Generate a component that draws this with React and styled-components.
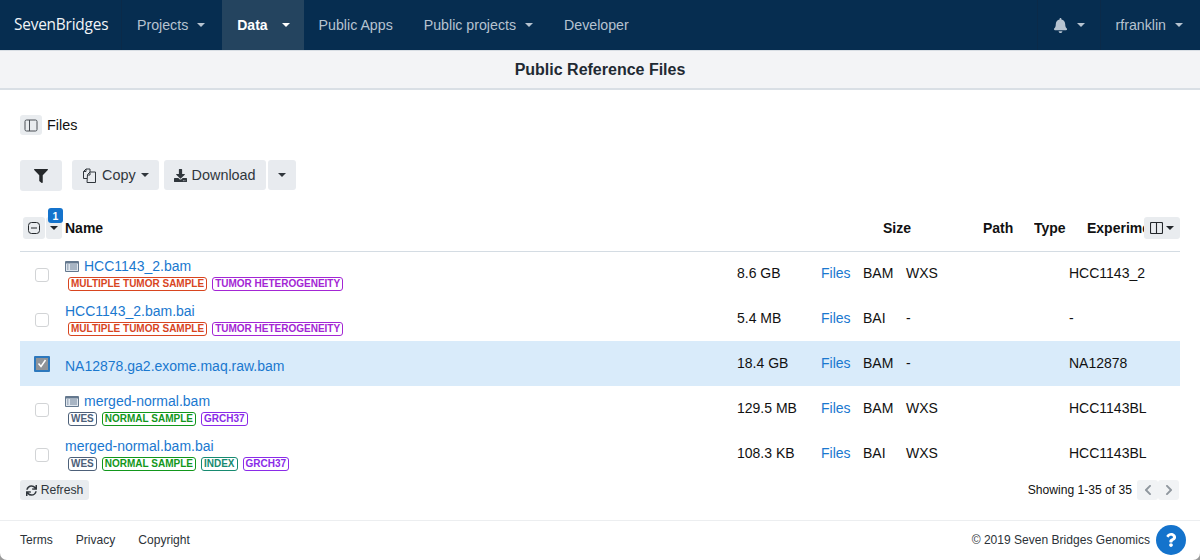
import React from "react";
import styled, { createGlobalStyle } from "styled-components";
import { FaBell, FaFilter, FaDownload, FaSync, FaChevronLeft, FaChevronRight, FaQuestion } from "react-icons/fa";

const Global = createGlobalStyle`
  html, body { margin: 0; padding: 0; height: 100%; background: #9a9a9a; }
  body { font-family: "Liberation Sans", Arial, sans-serif; color: #111; }
  * { box-sizing: border-box; }
`;

const Page = styled.div`
  width: 1200px;
  height: 560px;
  background: #fff;
  border-radius: 0 0 7px 7px;
  overflow: hidden;
  display: flex;
  flex-direction: column;
`;

const Nav = styled.nav`
  height: 50px;
  flex: none;
  display: flex;
  background: #062d50;
  color: #b6c3d0;
  font-size: 14.2px;
`;

const Logo = styled.div`
  width: 122px;
  padding: 14px 0 0 14px;
  color: #f1f4f7;
  font-family: "Open Sans", sans-serif;
  font-size: 15.4px;
  letter-spacing: -0.2px;
  border-right: 1px solid #0a2a49;
`;

const NavItem = styled.div`
  display: flex;
  align-items: center;
  padding: 0 ${(p) => p.$right || 16}px 0 15px;
  gap: ${(p) => p.$gap || 9}px;
  background: ${(p) => (p.$active ? "#24445f" : "transparent")};
  color: ${(p) => (p.$active ? "#fff" : "inherit")};
  font-weight: ${(p) => (p.$active ? "bold" : "normal")};
  font-size: ${(p) => (p.$active ? "14px" : "inherit")};
  border-left: ${(p) => (p.$line ? "1px solid #0a2a49" : "none")};
`;

const Spacer = styled.div`
  flex: 1;
`;

const Caret = styled.span`
  display: inline-block;
  width: 0;
  height: 0;
  border-left: ${(p) => p.$size || 4.5}px solid transparent;
  border-right: ${(p) => p.$size || 4.5}px solid transparent;
  border-top: ${(p) => p.$size || 4.5}px solid currentColor;
`;

const TitleBar = styled.div`
  height: 40px;
  flex: none;
  background: #f3f4f6;
  border-top: 1px solid #d8dee4;
  border-bottom: 2px solid #d9dfe5;
  font-size: 16px;
  font-weight: bold;
  color: #1f2a33;
  display: flex;
  align-items: center;
  justify-content: center;
`;

const Main = styled.main`
  flex: 1;
  padding: 25px 20px 0;
  display: flex;
  flex-direction: column;
`;

const PaneRow = styled.div`
  height: 20px;
  display: flex;
  align-items: center;
  gap: 5px;
  font-size: 14.4px;
`;

const PaneToggle = styled.div`
  width: 22px;
  height: 20px;
  background: #e9ecef;
  border-radius: 3px;
  display: flex;
  align-items: center;
  justify-content: center;
  color: #4a4f55;
`;

const Toolbar = styled.div`
  margin-top: 25px;
  display: flex;
  gap: 5px;
  align-items: flex-start;
`;

const Btn = styled.div`
  height: 30px;
  background: #e8ebef;
  border-radius: 3px;
  display: flex;
  align-items: center;
  justify-content: center;
  gap: 5px;
  color: #30363c;
  font-size: 14.4px;
  padding: 0 ${(p) => p.$pad ?? 10}px;
`;

const FilterBtn = styled(Btn)`
  width: 42px;
  height: 31px;
  margin-right: 5px;
  color: #25282b;
`;

const SplitBtn = styled.div`
  display: flex;
  gap: 2px;
`;

const HeadRow = styled.div`
  height: 47px;
  margin-top: 14px;
  border-bottom: 1px solid #d4dce3;
  display: grid;
  grid-template-columns: 45px 818px 100px 51px 53px 60px 33px;
  align-items: center;
  font-size: 14px;
  font-weight: bold;
`;

const HeadCell = styled.div`
  white-space: nowrap;
  overflow: hidden;
`;

const SelectGroup = styled.div`
  position: relative;
  display: flex;
  margin-left: 3px;
  gap: 1px;
`;

const SelectPart = styled.div`
  height: 22px;
  width: ${(p) => p.$w}px;
  background: #e9ecef;
  border-radius: 3px;
  display: flex;
  align-items: center;
  justify-content: center;
  color: #23272b;
`;

const CountBadge = styled.div`
  position: absolute;
  left: 25px;
  top: -9px;
  width: 15px;
  height: 15px;
  border-radius: 3px;
  background: #1473cc;
  color: #fff;
  font-size: 10.5px;
  font-weight: bold;
  display: flex;
  align-items: center;
  justify-content: center;
`;

const ColumnsBtn = styled.div`
  width: 36px;
  height: 22px;
  margin-left: -3px;
  background: #e9ecef;
  border-radius: 3px;
  display: flex;
  align-items: center;
  justify-content: center;
  gap: 3px;
  color: #23272b;
`;

const Row = styled.div`
  height: 44.7px;
  padding-bottom: 2px;
  margin-bottom: ${(p) => (p.$selected ? 0.7 : 0)}px;
  display: grid;
  grid-template-columns: 45px 672px 84px 42px 43px 163px 1fr;
  align-items: center;
  font-size: 14px;
  background: ${(p) => (p.$selected ? "#d9ebfa" : "transparent")};
`;

const Check = styled.div`
  width: ${(p) => (p.$checked ? 16 : 14)}px;
  height: ${(p) => (p.$checked ? 16 : 14)}px;
  margin: ${(p) => (p.$checked ? 2 : 4)}px 0 0 ${(p) => (p.$checked ? 14 : 15)}px;
  border-radius: ${(p) => (p.$checked ? 1 : 3)}px;
  border: ${(p) => (p.$checked ? "2px solid #2c78bd" : "1px solid #d2d4d6")};
  background: ${(p) => (p.$checked ? "#8f9398" : "#fff")};
  display: flex;
  align-items: center;
  justify-content: center;
`;

const NameCell = styled.div`
  display: flex;
  flex-direction: column;
  gap: 3px;
  margin-top: 3px;
  padding-top: ${(p) => (p.$plain ? 4 : 0)}px;
`;

const NameLine = styled.div`
  display: flex;
  align-items: center;
  gap: 5px;
  height: 16px;
`;

const FileLink = styled.a`
  color: #1a78cf;
  text-decoration: none;
`;

const Tags = styled.div`
  display: flex;
  gap: 5px;
  margin-left: 3px;
`;

const Tag = styled.span`
  height: 14px;
  padding: 0 2px;
  border: 1px solid ${(p) => p.$c};
  border-radius: 3px;
  color: ${(p) => p.$c};
  font-size: 10px;
  font-weight: bold;
  line-height: 12px;
  white-space: nowrap;
`;

const BottomBar = styled.div`
  margin-top: 4px;
  height: 20px;
  display: flex;
  align-items: center;
  justify-content: space-between;
`;

const RefreshBtn = styled.div`
  height: 20px;
  width: 69px;
  background: #e9ecef;
  border-radius: 3px;
  font-size: 12.2px;
  color: #30363c;
  display: flex;
  align-items: center;
  justify-content: center;
  gap: 4px;
`;

const Pager = styled.div`
  display: flex;
  align-items: center;
  font-size: 12.1px;
  gap: 5px;
  margin-right: 1px;
`;

const PageBtn = styled.div`
  width: 21px;
  height: 20px;
  background: #f1f3f5;
  color: #8f979e;
  border-radius: 3px;
  display: flex;
  align-items: center;
  justify-content: center;
  margin-right: ${(p) => (p.$first ? -5 : 0)}px;
`;

const Footer = styled.footer`
  height: 40px;
  flex: none;
  border-top: 1px solid #eceef0;
  padding: 0 14px 1px 20px;
  display: flex;
  align-items: center;
  font-size: 12.05px;
  color: #2c3238;
`;

const FootLink = styled.span`
  margin-right: 23px;
`;

const HelpBtn = styled.div`
  width: 30px;
  height: 30px;
  margin-left: 6px;
  border-radius: 50%;
  background: #1473cc;
  color: #fff;
  display: flex;
  align-items: center;
  justify-content: center;
`;

const RED = "#d8451f";
const PURPLE = "#a326d4";
const VIOLET = "#8a2be8";
const GREEN = "#12971b";
const TEAL = "#178a70";
const SLATE = "#4d6079";

const files = [
  { name: "HCC1143_2.bam", icon: true, size: "8.6 GB", type: "BAM", lib: "WXS", exp: "HCC1143_2",
    tags: [["MULTIPLE TUMOR SAMPLE", RED], ["TUMOR HETEROGENEITY", PURPLE]] },
  { name: "HCC1143_2.bam.bai", size: "5.4 MB", type: "BAI", lib: "-", exp: "-",
    tags: [["MULTIPLE TUMOR SAMPLE", RED], ["TUMOR HETEROGENEITY", PURPLE]] },
  { name: "NA12878.ga2.exome.maq.raw.bam", size: "18.4 GB", type: "BAM", lib: "-", exp: "NA12878", selected: true, tags: [] },
  { name: "merged-normal.bam", icon: true, size: "129.5 MB", type: "BAM", lib: "WXS", exp: "HCC1143BL",
    tags: [["WES", SLATE], ["NORMAL SAMPLE", GREEN], ["GRCH37", VIOLET]] },
  { name: "merged-normal.bam.bai", size: "108.3 KB", type: "BAI", lib: "WXS", exp: "HCC1143BL",
    tags: [["WES", SLATE], ["NORMAL SAMPLE", GREEN], ["INDEX", TEAL], ["GRCH37", VIOLET]] },
];

const PaneIcon = () => (
  <svg width="14" height="13" viewBox="0 0 14 13" fill="none" stroke="currentColor" strokeWidth="1">
    <rect x="1" y="1" width="12" height="11" rx="1.5" />
    <path d="M5.5 1v11" />
  </svg>
);

const CopyIcon = () => (
  <svg width="15" height="15" viewBox="0 0 15 15" fill="none" stroke="currentColor" strokeWidth="1">
    <path d="M5 10.5H1.5V3.5L4 1h4v3" />
    <path d="M5.5 6.5L8 4h5.5v10.5h-8.5z" />
    <path d="M8 4.5v2.5H5.5M4 1v2.5H1.5" />
  </svg>
);

const MinusBox = () => (
  <svg width="12" height="12" viewBox="0 0 12 12" fill="none" stroke="currentColor" strokeWidth="1">
    <rect x="0.5" y="0.5" width="11" height="11" rx="3" />
    <path d="M3 6h6" />
  </svg>
);

const ColumnsIcon = () => (
  <svg width="13" height="12" viewBox="0 0 13 12" fill="none" stroke="currentColor" strokeWidth="1.1">
    <rect x="0.5" y="0.5" width="12" height="11" rx="1" />
    <path d="M6.5 0.5v11" />
  </svg>
);

const FileListIcon = () => (
  <svg width="14" height="11" viewBox="0 0 14 11">
    <rect width="14" height="11" rx="1" fill="#64788e" />
    <rect x="1" y="2.5" width="12" height="7.5" fill="#dfe6ee" />
    <path d="M2 4h1.5M2 6h1.5M2 8h1.5M5 4h7M5 6h7M5 8h7" stroke="#64788e" strokeWidth="0.9" />
  </svg>
);

const Tick = () => (
  <svg width="10" height="9" viewBox="0 0 10 9" fill="none" stroke="#fff" strokeWidth="1.5">
    <path d="M1.5 4.5l2.5 3 4.5-6.5" />
  </svg>
);

export default function App() {
  return (
    <Page>
      <Global />
      <Nav>
        <Logo>SevenBridges</Logo>
        <NavItem $right={17}>Projects <Caret /></NavItem>
        <NavItem $active $gap={14} $right={14}>Data <Caret /></NavItem>
        <NavItem>Public Apps</NavItem>
        <NavItem>Public projects <Caret /></NavItem>
        <NavItem>Developer</NavItem>
        <Spacer />
        <NavItem $line $gap={9} $right={15}><FaBell size={15} /> <Caret /></NavItem>
        <NavItem $line $right={17}>rfranklin <Caret /></NavItem>
      </Nav>
      <TitleBar>Public Reference Files</TitleBar>
      <Main>
        <PaneRow>
          <PaneToggle><PaneIcon /></PaneToggle>
          Files
        </PaneRow>
        <Toolbar>
          <FilterBtn><FaFilter size={14} /></FilterBtn>
          <Btn><CopyIcon /> Copy <Caret $size={4} /></Btn>
          <SplitBtn>
            <Btn><FaDownload size={13} /> Download</Btn>
            <Btn $pad={10}><Caret $size={4.5} /></Btn>
          </SplitBtn>
        </Toolbar>
        <HeadRow>
          <SelectGroup>
            <SelectPart $w={22}><MinusBox /></SelectPart>
            <SelectPart $w={16}><Caret $size={4} /></SelectPart>
            <CountBadge>1</CountBadge>
          </SelectGroup>
          <HeadCell>Name</HeadCell>
          <HeadCell>Size</HeadCell>
          <HeadCell>Path</HeadCell>
          <HeadCell>Type</HeadCell>
          <HeadCell>Experiment</HeadCell>
          <ColumnsBtn><ColumnsIcon /><Caret $size={4} /></ColumnsBtn>
        </HeadRow>
        {files.map((f) => (
          <Row key={f.name} $selected={f.selected}>
            <Check $checked={f.selected}>{f.selected && <Tick />}</Check>
            <NameCell $plain={!f.tags.length}>
              <NameLine>
                {f.icon && <FileListIcon />}
                <FileLink href="#">{f.name}</FileLink>
              </NameLine>
              {f.tags.length > 0 && (
                <Tags>
                  {f.tags.map(([t, c]) => (
                    <Tag key={t} $c={c}>{t}</Tag>
                  ))}
                </Tags>
              )}
            </NameCell>
            <div>{f.size}</div>
            <FileLink href="#">Files</FileLink>
            <div>{f.type}</div>
            <div>{f.lib}</div>
            <div>{f.exp}</div>
          </Row>
        ))}
        <BottomBar>
          <RefreshBtn><FaSync size={11} /> Refresh</RefreshBtn>
          <Pager>
            Showing 1-35 of 35
            <PageBtn $first><FaChevronLeft size={12} /></PageBtn>
            <PageBtn><FaChevronRight size={12} /></PageBtn>
          </Pager>
        </BottomBar>
      </Main>
      <Footer>
        <FootLink>Terms</FootLink>
        <FootLink>Privacy</FootLink>
        <FootLink>Copyright</FootLink>
        <Spacer />
        © 2019 Seven Bridges Genomics
        <HelpBtn><FaQuestion size={14} /></HelpBtn>
      </Footer>
    </Page>
  );
}
